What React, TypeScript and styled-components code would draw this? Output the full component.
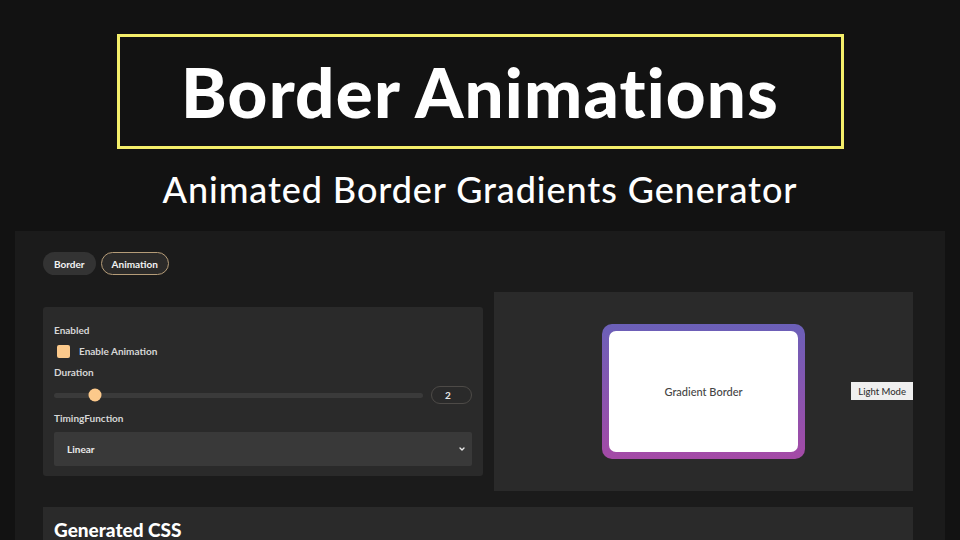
import styled, { createGlobalStyle } from 'styled-components';

const GlobalStyle = createGlobalStyle`
  html, body {
    margin: 0;
    padding: 0;
    background: #121212;
    overflow: hidden;
  }
  * {
    box-sizing: border-box;
  }
`;

const Page = styled.div`
  width: 960px;
  height: 540px;
  overflow: hidden;
  background: #121212;
  font-family: 'Lato', 'Noto Sans', sans-serif;
  color: #fff;
  display: flex;
  flex-direction: column;
  align-items: center;
  padding-top: 34px;
`;

const TitleBox = styled.div`
  flex-shrink: 0;
  width: 727px;
  height: 115px;
  border: 3px solid #f4ee6a;
  display: flex;
  align-items: center;
  justify-content: center;
`;

const Title = styled.h1`
  margin: 0;
  font-family: 'Lato', sans-serif;
  font-weight: 900;
  font-size: 69px;
  line-height: 80px;
  letter-spacing: 1.2px;
  color: #fff;
`;

const Subtitle = styled.h2`
  flex-shrink: 0;
  margin: 20px 0 0;
  font-family: 'Lato', sans-serif;
  font-weight: 500;
  font-size: 36px;
  letter-spacing: 0.9px;
  line-height: 40px;
  color: #fff;
`;

const Main = styled.main`
  width: 930px;
  margin-top: 22px;
  flex: 1;
  min-height: 0;
  overflow: hidden;
  background: #1b1b1b;
  padding: 21px 32px 0 28px;
  display: flex;
  flex-direction: column;
`;

const Tabs = styled.div`
  display: flex;
  gap: 5px;
`;

const Tab = styled.button<{ $active?: boolean }>`
  height: 23px;
  padding: 0 10px;
  border-radius: 999px;
  border: 1px solid ${(p) => (p.$active ? '#b59c78' : 'transparent')};
  background: ${(p) => (p.$active ? '#2b2a29' : '#333333')};
  color: #f2f2f2;
  font-family: 'Lato', sans-serif;
  font-weight: 700;
  font-size: 10px;
`;

const Row = styled.div`
  flex-shrink: 0;
  display: flex;
  align-items: center;
  gap: 11px;
  margin-top: 17px;
`;

const Controls = styled.section`
  width: 440px;
  background: #2a2a2a;
  border-radius: 3px;
  padding: 16px 11px 10px;
  display: flex;
  flex-direction: column;
  gap: 7px;
`;

const Label = styled.div`
  height: 14px;
  line-height: 14px;
  font-size: 10px;
  font-weight: 700;
  color: #d6d6d6;
`;

const CheckRow = styled.label`
  height: 14px;
  display: flex;
  align-items: center;
  gap: 9px;
  padding-left: 3px;
  font-size: 10px;
  font-weight: 700;
  color: #d6d6d6;
`;

const Check = styled.span`
  width: 13px;
  height: 13px;
  border-radius: 2px;
  background: #fcc98b;
`;

const SliderRow = styled.div`
  height: 18px;
  display: flex;
  align-items: center;
  gap: 8px;
`;

const Track = styled.div`
  position: relative;
  flex: 1;
  height: 5px;
  border-radius: 3px;
  background: #3a3a3a;
`;

const Thumb = styled.span`
  position: absolute;
  top: 50%;
  width: 13px;
  height: 13px;
  border-radius: 50%;
  background: #fcc98b;
  transform: translate(-50%, -50%);
`;

const NumberBox = styled.div`
  width: 41px;
  height: 18px;
  border: 1px solid #4d4a47;
  border-radius: 9px;
  font-size: 10px;
  font-weight: 700;
  color: #e6e6e6;
  display: flex;
  align-items: center;
  padding-left: 13px;
`;

const Select = styled.div`
  height: 34px;
  background: #393939;
  border-radius: 2px;
  display: flex;
  align-items: center;
  justify-content: space-between;
  padding: 0 6px 0 13px;
  font-size: 10px;
  font-weight: 700;
  color: #eaeaea;
`;

const Preview = styled.section`
  position: relative;
  flex: 1;
  height: 199px;
  background: #2a2a2a;
  display: flex;
  align-items: center;
  justify-content: center;
`;

const GradientFrame = styled.div`
  width: 203px;
  height: 135px;
  padding: 7px;
  border-radius: 10px;
  background: linear-gradient(180deg, #6b60b8 0%, #a44aa6 100%);
`;

const Card = styled.div`
  width: 100%;
  height: 100%;
  background: #fff;
  border-radius: 7px;
  display: flex;
  align-items: center;
  justify-content: center;
  font-size: 11px;
  font-weight: 500;
  color: #444;
`;

const ModeButton = styled.button`
  position: absolute;
  right: 0;
  top: 90px;
  height: 18px;
  padding: 0 7px;
  border: none;
  background: #efefef;
  color: #333;
  font-family: 'Lato', sans-serif;
  font-size: 9.5px;
  font-weight: 500;
`;

const Output = styled.section`
  margin-top: 16px;
  flex: 1;
  min-height: 60px;
  background: #2a2a2a;
  padding: 11px 11px;
`;

const OutputTitle = styled.h3`
  margin: 0;
  font-size: 19px;
  font-weight: 900;
  color: #fff;
`;

const Chevron = () => (
  <svg width="8" height="8" viewBox="0 0 24 24" fill="none" stroke="#eaeaea" strokeWidth="4" strokeLinecap="round" strokeLinejoin="round">
    <path d="M6 9l6 6 6-6" />
  </svg>
);

const App = () => {
  const duration = 2;
  const pct = ((duration - 1) / 9) * 100;
  return (
    <>
      <GlobalStyle />
      <Page>
        <TitleBox>
          <Title>Border Animations</Title>
        </TitleBox>
        <Subtitle>Animated Border Gradients Generator</Subtitle>
        <Main>
          <Tabs>
            <Tab>Border</Tab>
            <Tab $active>Animation</Tab>
          </Tabs>
          <Row>
            <Controls>
              <Label>Enabled</Label>
              <CheckRow>
                <Check />
                Enable Animation
              </CheckRow>
              <Label>Duration</Label>
              <SliderRow>
                <Track>
                  <Thumb style={{ left: `${pct}%` }} />
                </Track>
                <NumberBox>{duration}</NumberBox>
              </SliderRow>
              <Label>TimingFunction</Label>
              <Select>
                Linear
                <Chevron />
              </Select>
            </Controls>
            <Preview>
              <GradientFrame>
                <Card>Gradient Border</Card>
              </GradientFrame>
              <ModeButton>Light Mode</ModeButton>
            </Preview>
          </Row>
          <Output>
            <OutputTitle>Generated CSS</OutputTitle>
          </Output>
        </Main>
      </Page>
    </>
  );
};

export default App;
